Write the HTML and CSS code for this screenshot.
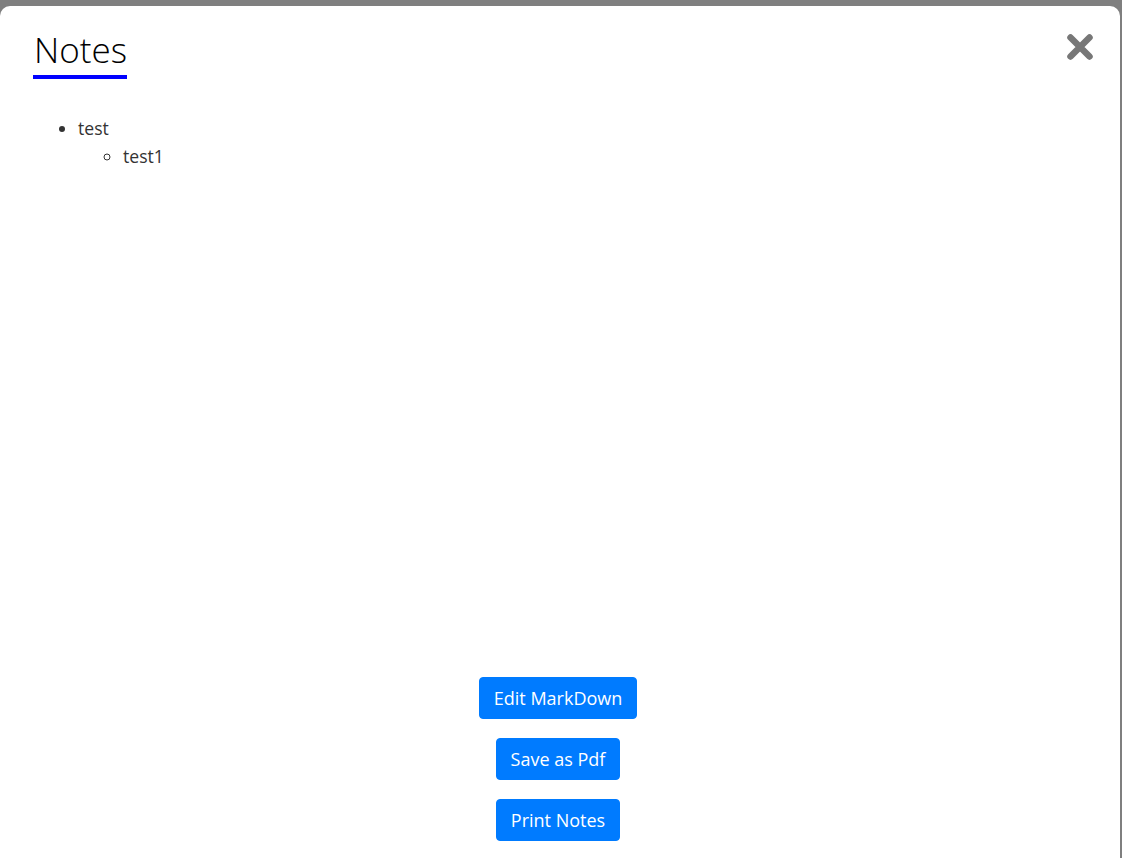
FILE: index.html
```html
<!DOCTYPE html>
<html>
<head>
<meta charset="utf-8">
<link rel="stylesheet" href="styles.css">
</head>
<body>
<div class="modal">
  <div class="header">
    <h1 class="title">Notes</h1>
    <button class="close" aria-label="Close">
      <svg width="28" height="26" viewBox="0 0 28 26"><path d="M4.5 3.5 L23.5 22.5 M23.5 3.5 L4.5 22.5" stroke="#777" stroke-width="6.5" stroke-linecap="round"/></svg>
    </button>
  </div>
  <div class="content">
    <ul class="list">
      <li>test
        <ul class="sub">
          <li>test1</li>
        </ul>
      </li>
    </ul>
  </div>
  <div class="footer">
    <button class="btn">Edit MarkDown</button>
    <button class="btn">Save as Pdf</button>
    <button class="btn">Print Notes</button>
  </div>
</div>
</body>
</html>
```

FILE: styles.css
```css
html, body {
  margin: 0;
  padding: 0;
  height: 100%;
  overflow: hidden;
}
body {
  background: #7f7f7f;
  font-family: "Open Sans", "Liberation Sans", sans-serif;
}
.modal {
  margin-top: 6px;
  width: 1120px;
  height: 860px;
  background: #fff;
  border-radius: 10px 10px 0 0;
  display: flex;
  flex-direction: column;
  box-sizing: border-box;
}
.header {
  display: flex;
  justify-content: space-between;
  align-items: flex-start;
  padding: 23px 26px 0 33px;
}
.title {
  margin: 0;
  padding: 0 0 4px 1px;
  font-size: 35px;
  font-weight: 300;
  line-height: 42px;
  color: #000;
  border-bottom: 4px solid #0000ff;
}
.close {
  background: none;
  border: 0;
  padding: 0;
  margin-top: 5px;
  cursor: pointer;
}
.content {
  flex: 1;
  padding: 35px 0 0 0;
}
.list {
  margin: 0;
  padding-left: 78px;
  font-size: 17.6px;
  line-height: 28px;
  color: #333;
  list-style: disc;
}
.sub {
  margin: 0;
  padding-left: 45px;
  list-style: circle;
}
.footer {
  display: flex;
  flex-direction: column;
  align-items: center;
  gap: 19px;
  padding: 0 4px 25px 0;
}
.btn {
  font-family: "Open Sans", "Liberation Sans", sans-serif;
  font-size: 18px;
  line-height: 24px;
  color: #fff;
  background: #007bff;
  border: 1px solid #007bff;
  border-radius: 4px;
  padding: 8px 14px;
}
```
